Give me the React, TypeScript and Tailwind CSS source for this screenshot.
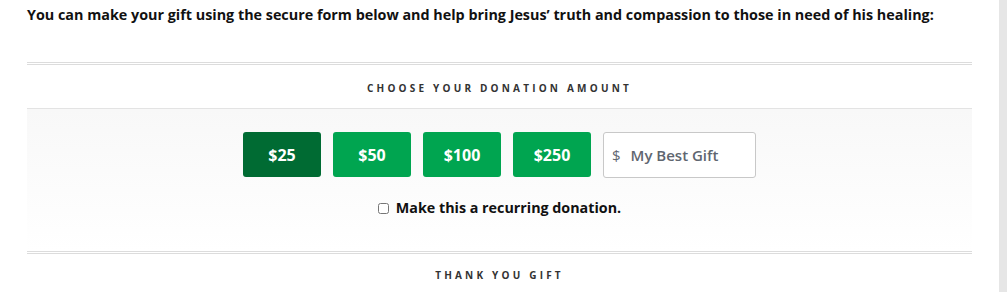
import { useState } from 'react';

const amounts = [25, 50, 100, 250];

export default function App() {
  const [selected, setSelected] = useState(25);
  const [recurring, setRecurring] = useState(false);

  return (
    <div className="flex h-[292px] w-full overflow-hidden bg-white font-['Open_Sans',sans-serif] text-[#111]">
      <div className="flex-1 pl-[27px] pr-[27px]">
        <p className="whitespace-nowrap pt-[5px] text-[14.35px] font-bold leading-[20px] text-[#111]">
          You can make your gift using the secure form below and help bring Jesus’ truth and compassion to those in need of his healing:
        </p>

        <div className="mt-[37px] h-[3px] border-y border-[#dcdcdc]" />
        <h3 className="pt-[16px] pb-[12px] text-center text-[10px] font-bold leading-[15px] tracking-[3.2px] text-[#333]">
          CHOOSE YOUR DONATION AMOUNT
        </h3>
        <div className="border-t border-[#e3e3e3] bg-gradient-to-b from-[#f8f8f8] to-white pt-[23px] pb-[33px]">
          <div className="flex justify-center gap-[12px]">
            {amounts.map((a) => (
              <button
                key={a}
                onClick={() => setSelected(a)}
                className={`h-[45px] w-[78px] rounded-[3px] text-[16px] font-bold text-white ${
                  selected === a ? 'bg-[#006b33]' : 'bg-[#00a550]'
                }`}
              >
                ${a}
              </button>
            ))}
            <label className="flex h-[46px] w-[153px] items-center rounded-[3px] border border-[#c8c8c8] bg-white pl-[8px]">
              <span className="text-[15px] text-[#5f6670]">$</span>
              <input
                placeholder="My Best Gift"
                className="ml-[10px] w-full bg-transparent text-[15px] font-semibold text-[#5f6670] outline-none placeholder:text-[#5f6670]"
              />
            </label>
          </div>
          <label className="mt-[20px] flex items-center justify-center gap-[7px] text-[14.3px] font-bold leading-[20px] text-[#111]">
            <input
              type="checkbox"
              checked={recurring}
              onChange={(e) => setRecurring(e.target.checked)}
              className="h-[11px] w-[11px]"
            />
            Make this a recurring donation.
          </label>
        </div>

        <div className="h-[3px] border-y border-[#dcdcdc]" />
        <h3 className="pt-[14px] text-center text-[10px] font-bold leading-[15px] tracking-[3.2px] text-[#333]">
          THANK YOU GIFT
        </h3>
      </div>
      <div className="w-[8px] shrink-0 bg-[#e6e6e6]" />
    </div>
  );
}
